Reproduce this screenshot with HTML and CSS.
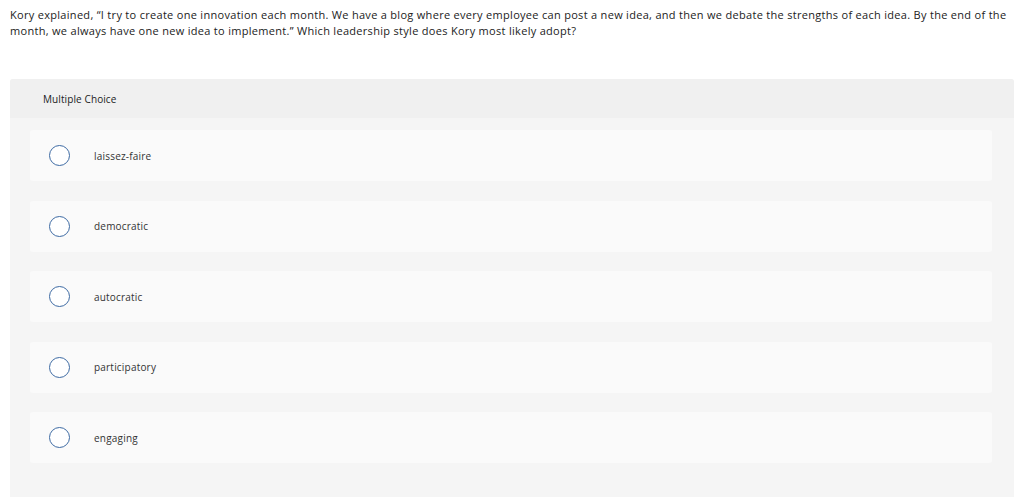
FILE: index.html
```html
<!DOCTYPE html>
<html lang="en">
<head>
  <meta charset="UTF-8">
  <title>Multiple Choice Question</title>
  <link rel="stylesheet" href="styles.css">
</head>
<body>
  <div class="question">
    <p class="prompt">Kory explained, “I try to create one innovation each month. We have a blog where every employee can post a new idea, and then we debate the strengths of each idea. By the end of the month, we always have one new idea to implement.” Which leadership style does Kory most likely adopt?</p>

    <div class="panel">
      <div class="panel-header">Multiple Choice</div>
      <div class="options">
        <label class="option">
          <span class="radio"></span>
          <span class="option-text">laissez-faire</span>
        </label>
        <label class="option">
          <span class="radio"></span>
          <span class="option-text">democratic</span>
        </label>
        <label class="option">
          <span class="radio"></span>
          <span class="option-text">autocratic</span>
        </label>
        <label class="option">
          <span class="radio"></span>
          <span class="option-text">participatory</span>
        </label>
        <label class="option">
          <span class="radio"></span>
          <span class="option-text">engaging</span>
        </label>
      </div>
    </div>
  </div>
</body>
</html>
```

FILE: styles.css
```css
* {
  box-sizing: border-box;
}

body {
  font-family: 'Open Sans', Lato, sans-serif;
  background: #fff;
  color: #222;
  margin: 0;
  padding: 0 10px;
}

.prompt {
  font-size: 11px;
  letter-spacing: 0.3px;
  line-height: 16px;
  margin: 7px 0 0;
  padding-right: 2px;
}

.panel {
  margin-top: 40px;
  background: #f5f5f5;
  border-radius: 3px 3px 0 0;
  padding-bottom: 40px;
}

.panel-header {
  background: #f0f0f0;
  height: 39px;
  padding: 0 33px;
  display: flex;
  align-items: center;
  font-size: 10px;
  letter-spacing: 0.1px;
  color: #222;
  border-radius: 3px 3px 0 0;
}

.options {
  display: flex;
  flex-direction: column;
  gap: 19.5px;
  padding: 12px 22px 0 20px;
}

.option {
  display: flex;
  align-items: center;
  height: 51px;
  background: #fafafa;
  border-radius: 3px;
  padding-left: 19px;
  cursor: pointer;
}

.radio {
  width: 21px;
  height: 21px;
  border: 1px solid #3d6aa3;
  border-radius: 50%;
  background: #fff;
  flex-shrink: 0;
}

.option-text {
  margin-left: 24px;
  font-size: 10px;
  letter-spacing: 0.2px;
  color: #333;
}
```
